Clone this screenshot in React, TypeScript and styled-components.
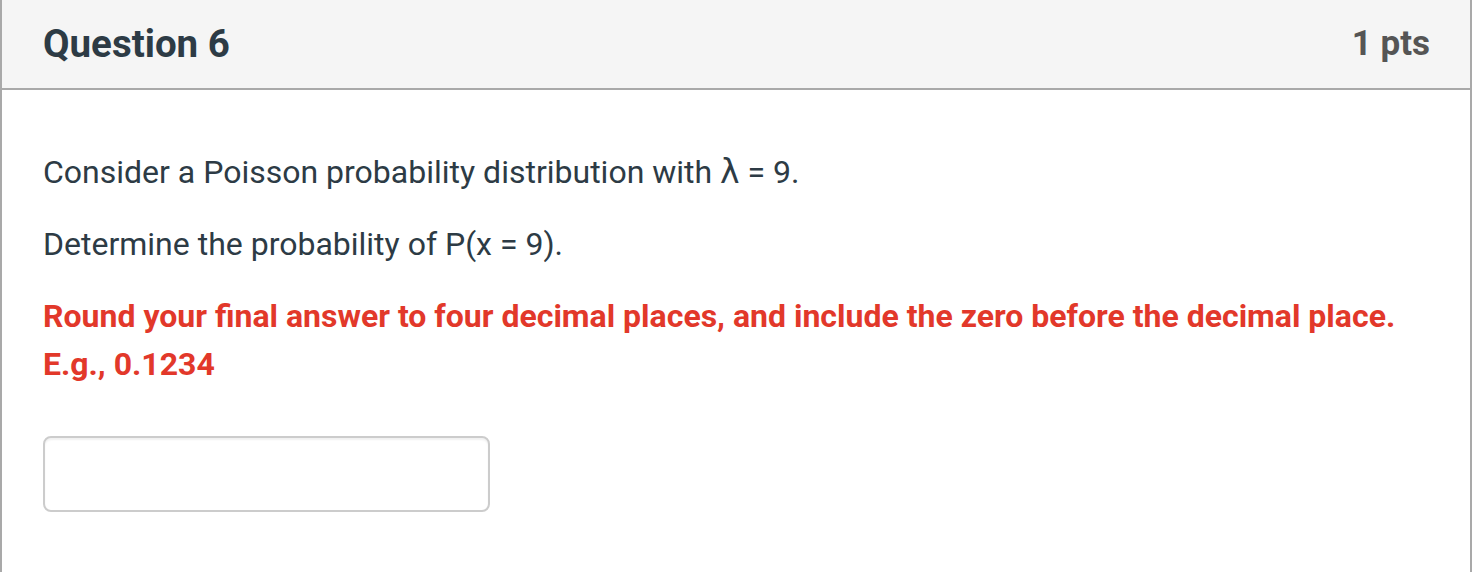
import styled, { createGlobalStyle } from "styled-components";

const GlobalStyle = createGlobalStyle`
  html, body {
    margin: 0;
    padding: 0;
    background: #ffffff;
  }
  body {
    font-family: Roboto, "Liberation Sans", sans-serif;
    color: #2d3b45;
  }
`;

const Card = styled.div`
  width: 1472px;
  height: 572px;
  box-sizing: border-box;
  border-left: 2px solid #a9a9a9;
  border-right: 2px solid #a9a9a9;
  display: flex;
  flex-direction: column;
`;

const Header = styled.div`
  height: 90px;
  box-sizing: border-box;
  background: #f5f5f5;
  border-bottom: 2px solid #a9a9a9;
  display: flex;
  align-items: center;
  justify-content: space-between;
  padding: 0 40px 2px 41px;
  flex-shrink: 0;
`;

const Title = styled.h2`
  margin: 0;
  font-size: 38.5px;
  font-weight: 700;
  color: #2d3b45;
`;

const Points = styled.div`
  font-size: 35px;
  font-weight: 700;
  color: #555555;
`;

const Body = styled.div`
  padding: 58px 41px 0 41px;
  font-size: 32px;
  line-height: 48px;
`;

const Paragraph = styled.p<{ $warn?: boolean }>`
  margin: 0 0 24px 0;
  color: ${(p) => (p.$warn ? "#e2382a" : "#2d3b45")};
  font-weight: ${(p) => (p.$warn ? 700 : 400)};
`;

const Lambda = styled.span`
  font-family: "DejaVu Sans", sans-serif;
  font-size: 33px;
`;

const AnswerInput = styled.input`
  display: block;
  margin-top: 48px;
  width: 447px;
  height: 76px;
  box-sizing: border-box;
  border: 2px solid #cccccc;
  border-radius: 8px;
  box-shadow: inset 0 2px 2px rgba(0, 0, 0, 0.06);
  background: #ffffff;
  outline: none;
`;

export default function App() {
  return (
    <>
      <GlobalStyle />
      <Card>
        <Header>
          <Title>Question 6</Title>
          <Points>1 pts</Points>
        </Header>
        <Body>
          <Paragraph>
            Consider a Poisson probability distribution with <Lambda>λ</Lambda> = 9.
          </Paragraph>
          <Paragraph>Determine the probability of P(x = 9).</Paragraph>
          <Paragraph $warn>
            Round your final answer to four decimal places, and include the zero before the
            decimal place. E.g., 0.1234
          </Paragraph>
          <AnswerInput type="text" aria-label="answer" />
        </Body>
      </Card>
    </>
  );
}
